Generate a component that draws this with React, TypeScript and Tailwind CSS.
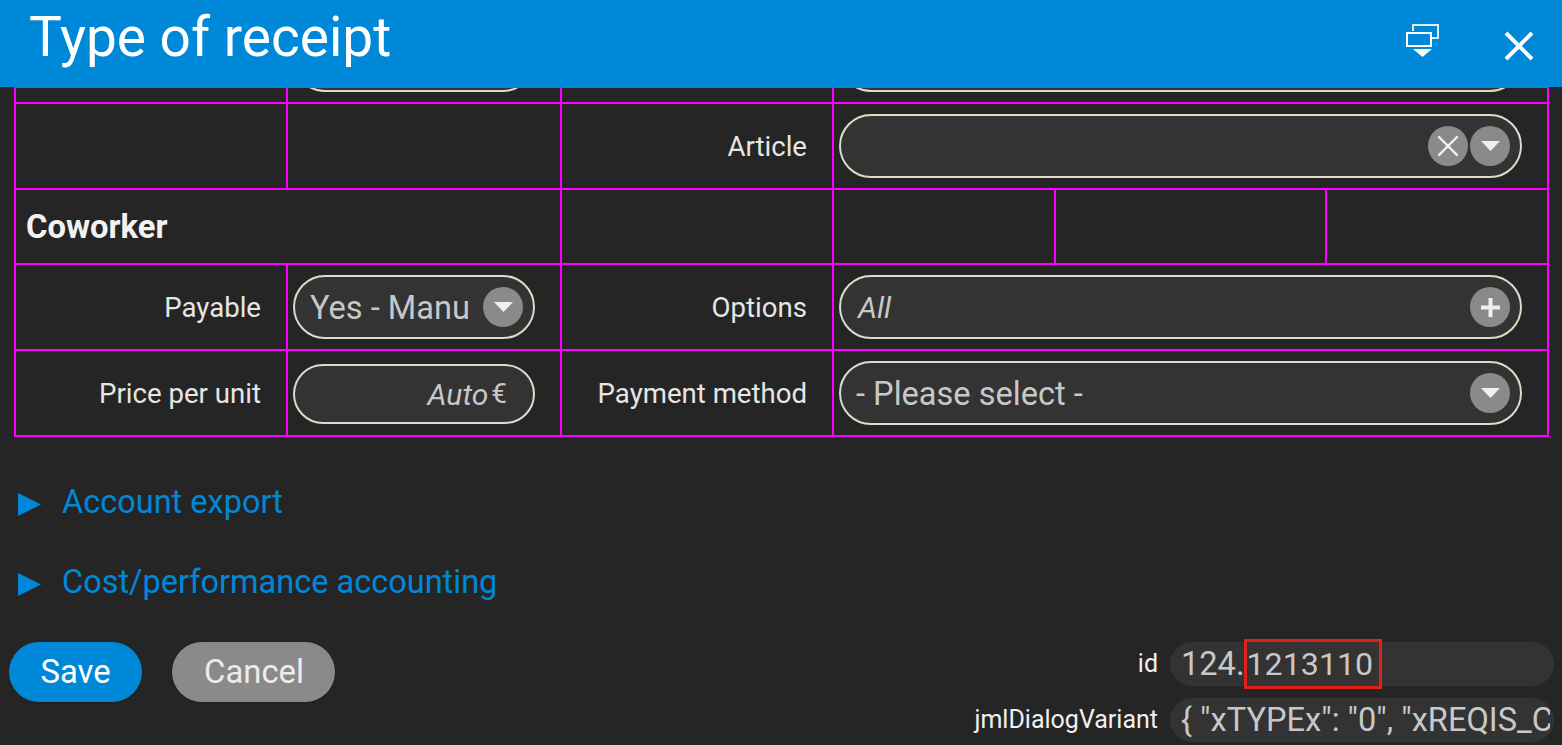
import { X } from "lucide-react";

function Caret() {
  return (
    <svg viewBox="0 0 19 10" className="h-[10px] w-[19px]">
      <path d="M0 0h19L9.500 10z" fill="#f0f0f0" />
    </svg>
  );
}

function PlusIcon() {
  return (
    <svg viewBox="0 0 19 19" className="h-[19px] w-[19px]">
      <path d="M7.500 0h4v7.500H19v4h-7.500V19h-4v-7.500H0v-4h7.500z" fill="#f0f0f0" />
    </svg>
  );
}

function RoundButton({ children }: { children: React.ReactNode }) {
  return (
    <span className="flex h-10 w-10 shrink-0 items-center justify-center rounded-full bg-[#8a8a8a]">
      {children}
    </span>
  );
}

function Pill({ className = "", children }: { className?: string; children?: React.ReactNode }) {
  return (
    <div
      className={`flex h-16 items-center rounded-[32px] border-2 border-[#dfdbc8] bg-[#333333] text-[#c8c8c8] ${className}`}
    >
      {children}
    </div>
  );
}

const cell = "border-2 border-[#ff00ff] p-0";
const label = `${cell} pt-[2px] pr-[25px] text-right text-[27.6px] leading-none text-[#e6e6e6]`;

export default function App() {
  return (
    <div className="flex h-[745px] flex-col overflow-hidden bg-[#252525] font-['Roboto',sans-serif]">
      {/* Title bar */}
      <header className="relative z-10 flex h-[87px] shrink-0 items-start bg-[#0088d8] pl-[29px] text-white">
        <h1 className="mt-[5px] text-[55px] leading-[64px]">Type of receipt</h1>
        <div className="ml-auto flex items-start">
          <svg viewBox="0 0 34 34" className="mt-[23px] h-[34px] w-[34px]" fill="none" stroke="white" strokeWidth="2">
            <path d="M8 8V2h25v13h-8" strokeOpacity="0.85" />
            <rect x="2" y="10" width="24" height="13" fill="#0088d8" />
            <path d="M8 26h19l-9.500 8z" fill="white" stroke="none" />
          </svg>
          <svg viewBox="0 0 30 30" className="mt-[31px] mr-[28px] ml-[65px] h-[30px] w-[30px]" stroke="white" strokeWidth="4">
            <path d="M2 2l26 26M28 2L2 28" />
          </svg>
        </div>
      </header>

      {/* Form, scrolled so its first row sits under the title bar */}
      <main className="flex-1 overflow-hidden">
        <table className="ml-[14px] -mt-[1px] w-[1533px] table-fixed border-collapse">
          <colgroup>
            <col className="w-[272px]" />
            <col className="w-[274px]" />
            <col className="w-[272px]" />
            <col className="w-[222px]" />
            <col className="w-[271px]" />
            <col className="w-[222px]" />
          </colgroup>
          <tbody>
            <tr className="h-[16px]">
              <td className={cell} />
              <td className={cell}>
                <div className="-mt-[67px] pr-[25px] pl-[5px]"><Pill /></div>
              </td>
              <td className={cell} />
              <td className={cell} colSpan={3}>
                <div className="-mt-[67px] pr-[25px] pl-[5px]"><Pill /></div>
              </td>
            </tr>
            <tr className="h-[86px]">
              <td className={cell} />
              <td className={cell} />
              <td className={label}>Article</td>
              <td className={`${cell} pr-[25px] pl-[5px]`} colSpan={3}>
                <Pill className="justify-end pr-[10px]">
                  <span className="flex gap-[2px]">
                    <RoundButton>
                      <X className="h-[36px] w-[36px] text-[#f0f0f0]" strokeWidth={1.6} absoluteStrokeWidth />
                    </RoundButton>
                    <RoundButton><Caret /></RoundButton>
                  </span>
                </Pill>
              </td>
            </tr>
            <tr className="h-[75px]">
              <td className={`${cell} pt-[3px] pl-[10px] text-[32.800px] font-bold text-[#f2f2f2]`} colSpan={2}>
                Coworker
              </td>
              <td className={cell} />
              <td className={cell} />
              <td className={cell} />
              <td className={cell} />
            </tr>
            <tr className="h-[86px]">
              <td className={label}>Payable</td>
              <td className={`${cell} pr-[25px] pl-[5px]`}>
                <Pill className="pr-[10px] pl-[15px] text-[32.600px]">
                  <span className="flex-1 pt-[2px]">Yes - Manu</span>
                  <RoundButton><Caret /></RoundButton>
                </Pill>
              </td>
              <td className={label}>Options</td>
              <td className={`${cell} pr-[25px] pl-[5px]`} colSpan={3}>
                <Pill className="pr-[10px] pl-[17px] text-[30px] text-[#a8a8a8] italic">
                  <span className="flex-1">All</span>
                  <RoundButton><PlusIcon /></RoundButton>
                </Pill>
              </td>
            </tr>
            <tr className="h-[86px]">
              <td className={label}>Price per unit</td>
              <td className={`${cell} pt-[2px] pr-[25px] pl-[5px]`}>
                <Pill className="h-[60px] justify-end pr-[26px] text-[30px] text-[#b4b4b4]">
                  <span className="italic">Auto</span>
                  <span className="ml-[3px] text-[28px] text-[#c8c8c8]">€</span>
                </Pill>
              </td>
              <td className={label}>Payment method</td>
              <td className={`${cell} pr-[25px] pl-[5px]`} colSpan={3}>
                <Pill className="pr-[10px] pl-[15px] text-[32.600px]">
                  <span className="flex-1 pt-[2px]">- Please select -</span>
                  <RoundButton><Caret /></RoundButton>
                </Pill>
              </td>
            </tr>
          </tbody>
        </table>

        {/* Collapsed sections */}
        <div className="mt-[45px] flex flex-col gap-[40px] text-[#0088d8]">
          {["Account export", "Cost/performance accounting"].map((title) => (
            <div key={title} className="flex h-[40px] items-center pl-[18px]">
              <svg viewBox="0 0 23 23" className="mt-[4px] h-[23px] w-[23px]">
                <path d="M0 0l23 11.500L0 23z" fill="currentColor" />
              </svg>
              <span className="ml-[21px] text-[32.500px] leading-none">{title}</span>
            </div>
          ))}
        </div>

        {/* Footer */}
        <div className="mt-[40px] flex justify-between">
          <div className="flex items-start pl-[9px]">
            <button className="h-[60px] w-[133px] rounded-[30px] bg-[#0088d8] pt-[2px] text-[32.800px] text-white shadow-sm">Save</button>
            <button className="ml-[30px] h-[60px] w-[163px] rounded-[30px] bg-[#8a8a8a] pt-[2px] pl-[1px] text-[32.800px] text-[#ececec] shadow-sm">Cancel</button>
          </div>
          <div className="grid grid-cols-[auto_384px] items-center gap-x-[12px] gap-y-[12px] pr-[8px] text-[#c8c8c8]">
            <span className="text-right text-[25px] text-[#f0f0f0]">id</span>
            <div className="flex h-[44px] items-center rounded-[22px] bg-[#333333] pl-[11px] text-[32.600px]">
              124.
              <span className="-ml-[1px] border-[3px] border-[#e0201c] pr-[6px] text-[32.200px] leading-[44px]">1213110</span>
            </div>
            <span className="text-right text-[25px] text-[#f0f0f0]">jmlDialogVariant</span>
            <div className="h-[44px] overflow-hidden rounded-[22px] bg-[#333333] pr-[4px] pl-[11px] text-[32.600px] leading-[44px] whitespace-nowrap">
              <div className="overflow-hidden">{'{ "xTYPEx": "0", "xREQIS_CODE": "1" }'}</div>
            </div>
          </div>
        </div>
      </main>
    </div>
  );
}
